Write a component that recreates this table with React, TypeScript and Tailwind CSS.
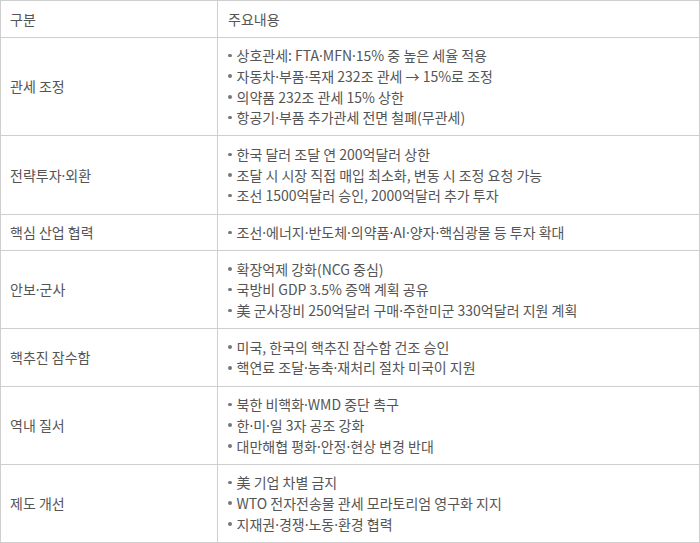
const rows: { label: string; items: string[] }[] = [
  {
    label: "관세 조정",
    items: [
      "상호관세: FTA·MFN·15% 중 높은 세율 적용",
      "자동차·부품·목재 232조 관세 → 15%로 조정",
      "의약품 232조 관세 15% 상한",
      "항공기·부품 추가관세 전면 철폐(무관세)",
    ],
  },
  {
    label: "전략투자·외환",
    items: [
      "한국 달러 조달 연 200억달러 상한",
      "조달 시 시장 직접 매입 최소화, 변동 시 조정 요청 가능",
      "조선 1500억달러 승인, 2000억달러 추가 투자",
    ],
  },
  {
    label: "핵심 산업 협력",
    items: ["조선·에너지·반도체·의약품·AI·양자·핵심광물 등 투자 확대"],
  },
  {
    label: "안보·군사",
    items: [
      "확장억제 강화(NCG 중심)",
      "국방비 GDP 3.5% 증액 계획 공유",
      "美 군사장비 250억달러 구매·주한미군 330억달러 지원 계획",
    ],
  },
  {
    label: "핵추진 잠수함",
    items: ["미국, 한국의 핵추진 잠수함 건조 승인", "핵연료 조달·농축·재처리 절차 미국이 지원"],
  },
  {
    label: "역내 질서",
    items: ["북한 비핵화·WMD 중단 촉구", "한·미·일 3자 공조 강화", "대만해협 평화·안정·현상 변경 반대"],
  },
  {
    label: "제도 개선",
    items: ["美 기업 차별 금지", "WTO 전자전송물 관세 모라토리엄 영구화 지지", "지재권·경쟁·노동·환경 협력"],
  },
];

// the CJK font draws "·" full width; the reference has a narrow dot
function Dotted({ text }: { text: string }) {
  const parts = text.split("·");
  return (
    <>
      {parts.map((p, i) => (
        <span key={i}>
          {i > 0 && <span className="font-['Noto_Sans'] leading-[0]">·</span>}
          {p}
        </span>
      ))}
    </>
  );
}

export default function App() {
  return (
    <div className="w-[700px] bg-white font-['Noto_Sans_CJK_KR','Noto_Sans',sans-serif] text-[14px] leading-[20.7px] text-[#555]">
      <table className="w-full border-collapse">
        <thead>
          <tr>
            <th className="w-[217px] border border-[#cfcfcf] py-[7.5px] pl-[9px] text-left font-normal">구분</th>
            <th className="border border-[#cfcfcf] py-[7.5px] pl-[10px] text-left font-normal">주요내용</th>
          </tr>
        </thead>
        <tbody>
          {rows.map((r) => (
            <tr key={r.label}>
              <td className="border border-[#cfcfcf] py-[7.5px] pl-[9px] align-middle">
                <div className="h-[20.7px] whitespace-nowrap">
                  <Dotted text={r.label} />
                </div>
              </td>
              <td className="border border-[#cfcfcf] py-[7.5px] pl-[10px]">
                {r.items.map((it) => (
                  <div key={it} className="flex h-[20.7px] items-center whitespace-nowrap">
                    <span className="mr-[5px] size-[3.5px] shrink-0 rounded-full bg-[#777]" />
                    <span>
                      <Dotted text={it} />
                    </span>
                  </div>
                ))}
              </td>
            </tr>
          ))}
        </tbody>
      </table>
    </div>
  );
}
